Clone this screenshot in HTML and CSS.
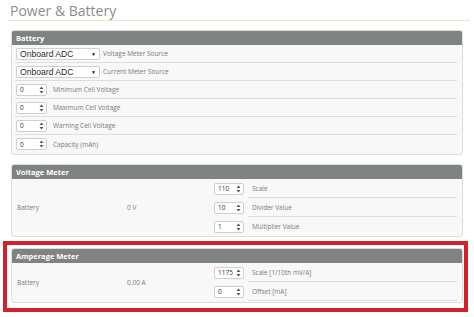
FILE: index.html
```html
<!DOCTYPE html>
<html>
<head>
<meta charset="utf-8">
<link rel="stylesheet" href="styles.css">
</head>
<body>
<div class="title-wrap"><h1 class="title">Power &amp; Battery</h1></div>
<div class="panels">
  <div class="panel">
    <div class="panel-head">Battery</div>
    <div class="rows">
      <div class="row"><div class="select"><span>Onboard ADC</span><span class="arrow">▼</span></div><span class="label sel-label">Voltage Meter Source</span></div>
      <div class="row"><div class="select"><span>Onboard ADC</span><span class="arrow">▼</span></div><span class="label sel-label">Current Meter Source</span></div>
      <div class="row"><div class="num"><span>0</span><svg class="spin" viewBox="0 0 5 8" width="5" height="8"><path d="M2.5 0.5 L4.5 3 L0.5 3 Z M2.5 7.5 L4.5 5 L0.5 5 Z" fill="#555"/></svg></div><span class="label">Minimum Cell Voltage</span></div>
      <div class="row"><div class="num"><span>0</span><svg class="spin" viewBox="0 0 5 8" width="5" height="8"><path d="M2.5 0.5 L4.5 3 L0.5 3 Z M2.5 7.5 L4.5 5 L0.5 5 Z" fill="#555"/></svg></div><span class="label">Maximum Cell Voltage</span></div>
      <div class="row"><div class="num"><span>0</span><svg class="spin" viewBox="0 0 5 8" width="5" height="8"><path d="M2.5 0.5 L4.5 3 L0.5 3 Z M2.5 7.5 L4.5 5 L0.5 5 Z" fill="#555"/></svg></div><span class="label">Warning Cell Voltage</span></div>
      <div class="row last"><div class="num"><span>0</span><svg class="spin" viewBox="0 0 5 8" width="5" height="8"><path d="M2.5 0.5 L4.5 3 L0.5 3 Z M2.5 7.5 L4.5 5 L0.5 5 Z" fill="#555"/></svg></div><span class="label">Capacity (mAh)</span></div>
    </div>
  </div>

  <div class="panel meter-panel">
    <div class="panel-head">Voltage Meter</div>
    <div class="meter">
      <div class="m-name label">Battery</div>
      <div class="m-value label">0 V</div>
      <div class="m-fields">
        <div class="m-row"><div class="num num-m"><span>110</span><svg class="spin" viewBox="0 0 5 8" width="5" height="8"><path d="M2.5 0.5 L4.5 3 L0.5 3 Z M2.5 7.5 L4.5 5 L0.5 5 Z" fill="#555"/></svg></div><span class="label m-label">Scale</span></div>
        <div class="m-row"><div class="num num-m"><span>10</span><svg class="spin" viewBox="0 0 5 8" width="5" height="8"><path d="M2.5 0.5 L4.5 3 L0.5 3 Z M2.5 7.5 L4.5 5 L0.5 5 Z" fill="#555"/></svg></div><span class="label m-label">Divider Value</span></div>
        <div class="m-row last"><div class="num num-m"><span>1</span><svg class="spin" viewBox="0 0 5 8" width="5" height="8"><path d="M2.5 0.5 L4.5 3 L0.5 3 Z M2.5 7.5 L4.5 5 L0.5 5 Z" fill="#555"/></svg></div><span class="label m-label">Multiplier Value</span></div>
      </div>
    </div>
  </div>

  <div class="highlight">
    <div class="panel amp-panel">
      <div class="panel-head">Amperage Meter</div>
      <div class="meter">
        <div class="m-name label">Battery</div>
        <div class="m-value label">0.00 A</div>
        <div class="m-fields">
          <div class="m-row"><div class="num num-m"><span>1175</span><svg class="spin" viewBox="0 0 5 8" width="5" height="8"><path d="M2.5 0.5 L4.5 3 L0.5 3 Z M2.5 7.5 L4.5 5 L0.5 5 Z" fill="#555"/></svg></div><span class="label m-label">Scale [1/10th mV/A]</span></div>
          <div class="m-row"><div class="num num-m"><span>0</span><svg class="spin" viewBox="0 0 5 8" width="5" height="8"><path d="M2.5 0.5 L4.5 3 L0.5 3 Z M2.5 7.5 L4.5 5 L0.5 5 Z" fill="#555"/></svg></div><span class="label m-label">Offset [mA]</span></div>
        </div>
      </div>
    </div>
  </div>
</div>
</body>
</html>
```
FILE: styles.css
```css
* { box-sizing: border-box; }
html, body { margin: 0; padding: 0; background: #ffffff; }
body { width: 474px; height: 317px; overflow: hidden; font-family: "Open Sans", "Liberation Sans", sans-serif; }

.title-wrap { margin: 0 4px 0 8px; padding-top: 2px; border-bottom: 1px solid #ede7c6; }
.title { margin: 0; padding-left: 2px; font-size: 14px; line-height: 18px; font-weight: 400; color: #8c8c8c; }

.panels { padding: 9px 11px 0 11px; }

.panel { background: #f8f8f8; border: 1px solid #dcdcdc; border-radius: 3px; overflow: hidden; }
.panel-head { height: 14px; background: #7f8381; color: #ffffff; font-weight: 700; font-size: 7.5px; line-height: 14px; padding-left: 4px; }

.rows { padding: 0 5px 1px 3px; }
.row { height: 18px; display: flex; align-items: center; padding-left: 1px; border-bottom: 1px solid #dddddd; }
.row.last { border-bottom: none; }

.label { font-size: 6.5px; color: #7a7a7a; white-space: nowrap; }
.row .label { margin-left: 6px; }
.row .sel-label { margin-left: 3px; }

.select { width: 84px; height: 12px; background: #fff; border: 1px solid #cfcfcf; border-radius: 2px; display: flex; align-items: center; justify-content: space-between; padding: 0 3px 0 3px; font-family: "Liberation Sans", Arial, sans-serif; font-size: 8.6px; color: #2a2a2a; }
.select .arrow { font-size: 5px; color: #111; }

.num { width: 31px; height: 12px; background: #fff; border: 1px solid #cfcfcf; border-radius: 2px; display: flex; align-items: center; justify-content: space-between; padding: 0 2px 0 3px; font-size: 6.5px; color: #333; }
.num-m { width: 30px; }
.spin { display: block; }

.meter-panel { margin-top: 9px; }
.meter { display: grid; grid-template-columns: 110px 87px 1fr; padding-left: 5px; }
.m-name, .m-value { align-self: center; }
.m-fields { padding-right: 5px; }
.m-row { height: 19px; display: flex; align-items: stretch; }
.m-row .num { align-self: center; }
.m-label { flex: 1; margin-left: 4px; padding-left: 4px; display: flex; align-items: center; border-bottom: 1px solid #dddddd; }
.m-row.last .m-label { border-bottom: none; }

.highlight { margin: 4px -5px 0 -8px; border: 4px solid #d3222b; padding: 3px 1px 5px 4px; }
.amp-panel .m-fields { padding-bottom: 1px; }
```
